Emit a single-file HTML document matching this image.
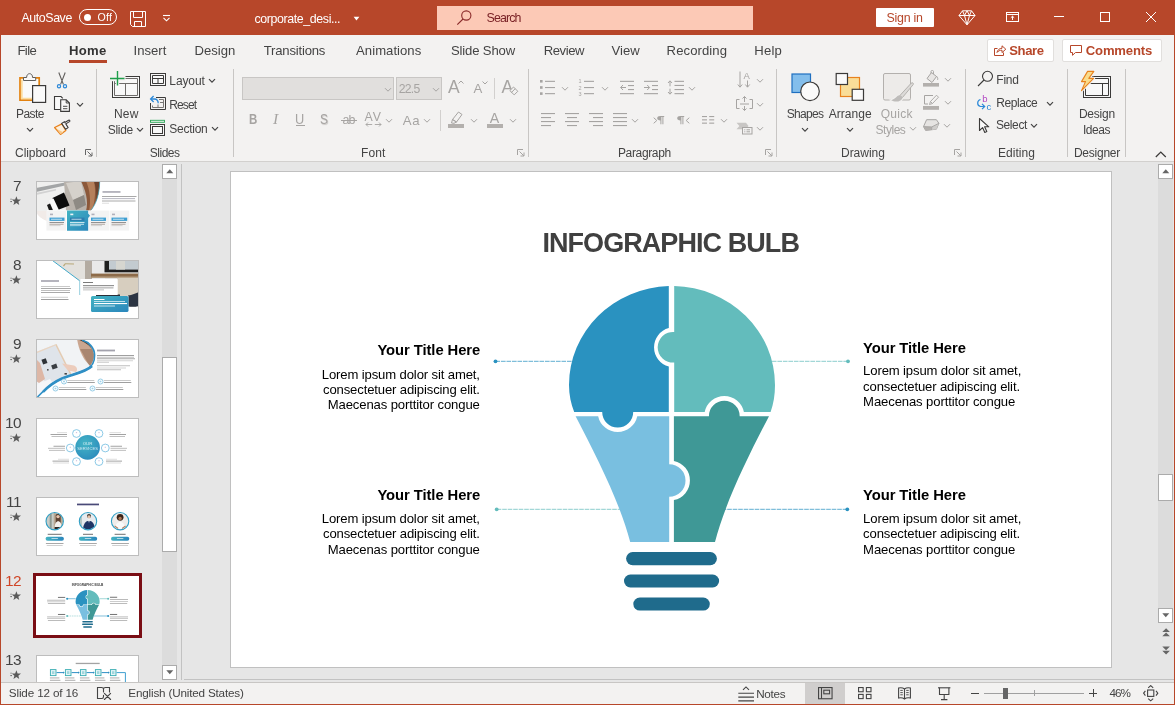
<!DOCTYPE html>
<html><head><meta charset="utf-8">
<style>
*{box-sizing:border-box;margin:0;padding:0}
html,body{width:1175px;height:705px;overflow:hidden;background:#b7472a;font-family:"Liberation Sans",sans-serif;}
.a{position:absolute}
.t{position:absolute;white-space:nowrap;line-height:1}
#win{position:absolute;left:0;top:0;width:1175px;height:705px;overflow:hidden;will-change:transform}
</style></head><body>
<div id="win">
<div class="a" style="left:0px;top:0px;width:1175px;height:705px;background:#b7472a;"></div>
<div class="a" style="left:1px;top:35px;width:1173px;height:126.5px;background:#f3f2f1;"></div>
<div class="a" style="left:1px;top:161px;width:1173px;height:1.5px;background:#d2d0ce;"></div>
<div class="a" style="left:1px;top:162px;width:1173px;height:520px;background:#e6e6e6;"></div>
<div class="a" style="left:1px;top:682px;width:1173px;height:22px;background:#f3f2f1;border-top:1px solid #c8c6c4;"></div>
<span class="t" style="left: 21.5px; top: 11px; font-size: 12.4px; line-height: 14px; color: rgb(255, 255, 255); letter-spacing: -0.42px;">AutoSave</span>
<div class="a" style="left:79px;top:9px;width:38px;height:16px;border:1px solid #fff;border-radius:8px;"></div>
<div class="a" style="left:83.8px;top:13.6px;width:7px;height:7px;background:#fff;border-radius:50%;"></div>
<span class="t" style="left: 97.5px; top: 11px; font-size: 10.6px; line-height: 12px; color: rgb(255, 255, 255); letter-spacing: 0.28px;">Off</span>
<svg class="a" style="left:130px;top:11px;" width="17" height="17" viewBox="0 0 17 17"><g fill="none" stroke="#fff" stroke-width="1"><path d="M0.5 0.5H15.5V15.5H2.5L0.5 13.5Z"></path><path d="M3.5 0.5V6.5H12.5V0.5"></path><path d="M4.5 15.5V10.5H11.5V15.5"></path></g></svg>
<svg class="a" style="left:162px;top:14px;" width="10" height="8" viewBox="0 0 10 8"><g fill="none" stroke="#fff" stroke-width="1.1"><path d="M1 1.5H8"></path><path d="M1.5 3.8L4.5 6.8L7.5 3.8"></path></g></svg>
<span class="t" style="left: 254.5px; top: 12px; font-size: 12.4px; line-height: 14px; color: rgb(255, 255, 255); letter-spacing: -0.39px;">corporate_desi...</span>
<svg class="a" style="left:353px;top:16px;" width="7" height="5" viewBox="0 0 7 5"><path d="M0.6 0.8H6.4L3.5 4.4Z" fill="#fff"></path></svg>
<div class="a" style="left:437px;top:6px;width:316px;height:24px;background:#fcc9b6;"></div>
<svg class="a" style="left:456px;top:9px;" width="17" height="17" viewBox="0 0 17 17"><g fill="none" stroke="#8a2a2a" stroke-width="1.1"><circle cx="10.3" cy="6.5" r="4.6"></circle><path d="M7 10L1.3 15.7"></path></g></svg>
<span class="t" style="left: 486.5px; top: 11px; font-size: 12.4px; line-height: 14px; color: rgb(122, 34, 38); letter-spacing: -0.87px;">Search</span>
<div class="a" style="left:876px;top:8px;width:58px;height:19px;background:#fff;border-radius:1px;"></div>
<span class="t" style="left: 886.5px; top: 11px; font-size: 12.4px; line-height: 14px; color: rgb(183, 71, 42); letter-spacing: -0.25px;">Sign in</span>
<svg class="a" style="left:958px;top:10px;" width="18" height="16" viewBox="0 0 18 16"><g fill="none" stroke="#fff" stroke-width="1" stroke-linejoin="round"><path d="M4.5 0.8H13.5L17 5.5L9 14.8L1 5.5Z"></path><path d="M1 5.5H17"></path><path d="M4.5 0.8L6.5 5.5L9 14.8L11.5 5.5L13.5 0.8"></path><path d="M6.5 5.5L9 0.8L11.5 5.5"></path></g></svg>
<svg class="a" style="left:1006px;top:12px;" width="14" height="11" viewBox="0 0 14 11"><g fill="none" stroke="#fff" stroke-width="1"><rect x="0.5" y="0.5" width="12" height="9"></rect><path d="M0.5 2.5H12.5"></path><path d="M6.5 8V4.2M4.8 5.8L6.5 4.2L8.2 5.8"></path></g></svg>
<div class="a" style="left:1054px;top:16px;width:10px;height:1px;background:#fff;"></div>
<div class="a" style="left:1100px;top:12px;width:10px;height:10px;border:1px solid #fff;"></div>
<svg class="a" style="left:1146px;top:12px;" width="10" height="10" viewBox="0 0 10 10"><path d="M0 0L10 10M10 0L0 10" stroke="#fff" stroke-width="1"></path></svg>
<span class="t" style="left: 17.4px; top: 43px; font-size: 13.1px; line-height: 15px; color: rgb(68, 68, 68); letter-spacing: -0.57px;">File</span>
<span class="t" style="left: 69px; top: 43px; font-size: 13.1px; line-height: 15px; color: rgb(51, 51, 51); font-weight: bold; letter-spacing: 0.3px;">Home</span>
<div class="a" style="left:69px;top:60px;width:38px;height:3px;background:#b7472a;"></div>
<span class="t" style="left: 133.5px; top: 43px; font-size: 13.1px; line-height: 15px; color: rgb(68, 68, 68); letter-spacing: 0.03px;">Insert</span>
<span class="t" style="left: 194.5px; top: 43px; font-size: 13.1px; line-height: 15px; color: rgb(68, 68, 68); letter-spacing: -0.01px;">Design</span>
<span class="t" style="left: 263.8px; top: 43px; font-size: 13.1px; line-height: 15px; color: rgb(68, 68, 68); letter-spacing: -0.2px;">Transitions</span>
<span class="t" style="left: 356.1px; top: 43px; font-size: 13.1px; line-height: 15px; color: rgb(68, 68, 68); letter-spacing: 0.04px;">Animations</span>
<span class="t" style="left: 450.9px; top: 43px; font-size: 13.1px; line-height: 15px; color: rgb(68, 68, 68); letter-spacing: -0.14px;">Slide Show</span>
<span class="t" style="left: 543.7px; top: 43px; font-size: 13.1px; line-height: 15px; color: rgb(68, 68, 68); letter-spacing: -0.43px;">Review</span>
<span class="t" style="left: 611.5px; top: 43px; font-size: 13.1px; line-height: 15px; color: rgb(68, 68, 68); letter-spacing: 0.05px;">View</span>
<span class="t" style="left: 666.6px; top: 43px; font-size: 13.1px; line-height: 15px; color: rgb(68, 68, 68); letter-spacing: 0.09px;">Recording</span>
<span class="t" style="left: 754.3px; top: 43px; font-size: 13.1px; line-height: 15px; color: rgb(68, 68, 68); letter-spacing: 0.22px;">Help</span>
<div class="a" style="left:987px;top:39px;width:66.5px;height:22.5px;background:#fff;border:1px solid #e1dfdd;border-radius:2px;"></div>
<svg class="a" style="left:993.5px;top:45px;" width="13" height="12" viewBox="0 0 13 12"><g fill="none" stroke="#b7472a" stroke-width="1"><path d="M3.5 3.5H0.5V10.5H9.5V7.5"></path><path d="M3 7.5C3.5 4.8 5.5 3.3 8 3.3V0.8L11.8 4.2L8 7.6V5.2C5.8 5.2 4.2 5.9 3 7.5Z"></path></g></svg>
<span class="t" style="left: 1009.2px; top: 43px; font-size: 13.1px; line-height: 15px; color: rgb(183, 71, 42); font-weight: bold; letter-spacing: -0.38px;">Share</span>
<div class="a" style="left:1062px;top:39px;width:99.5px;height:22.5px;background:#fff;border:1px solid #e1dfdd;border-radius:2px;"></div>
<svg class="a" style="left:1070px;top:45px;" width="13" height="12" viewBox="0 0 13 12"><path d="M0.5 0.5H11.5V7.5H5.5L2.5 10.3V7.5H0.5Z" fill="none" stroke="#b7472a" stroke-width="1"></path></svg>
<span class="t" style="left: 1085.8px; top: 43px; font-size: 13.1px; line-height: 15px; color: rgb(183, 71, 42); font-weight: bold; letter-spacing: -0.18px;">Comments</span>
<svg class="a" style="left:18px;top:72px;" width="30" height="32" viewBox="0 0 30 32"><path d="M2 5.8H21.2V28.2H2Z" fill="#fafafa" stroke="#e3820f" stroke-width="1.7"></path><path d="M3.8 7.4V26.5H20" fill="none" stroke="#fbdc9e" stroke-width="1.7"></path>
<path d="M5.5 8.5V5.5H8.6C8.6 0.4 14.6 0.4 14.6 5.5H17.7V8.5Z" fill="#f8f8f8" stroke="#605e5c" stroke-width="1"></path>
<rect x="14.6" y="13.6" width="13" height="16.8" fill="#fafafa" stroke="#3b3a39" stroke-width="1.2"></rect></svg>
<span class="t" style="left: 16.1px; top: 107px; font-size: 12px; line-height: 14px; color: rgb(68, 68, 68); letter-spacing: -0.62px;">Paste</span>
<svg class="a" style="left:25.8px;top:127px;" width="8" height="6" viewBox="0 0 8 6"><path d="M1 1.2L4 4.2L7 1.2" fill="none" stroke="#444" stroke-width="1.2"></path></svg>
<svg class="a" style="left:56px;top:72px;" width="12" height="17" viewBox="0 0 12 17"><g fill="none"><path d="M2.8 0.5L7.4 12.4M9.2 0.5L4.6 12.4" stroke="#605e5c" stroke-width="1.1"></path>
<circle cx="3" cy="14.2" r="1.6" stroke="#2b88d8" stroke-width="1.2"></circle><circle cx="9" cy="14.2" r="1.6" stroke="#2b88d8" stroke-width="1.2"></circle></g></svg>
<svg class="a" style="left:53px;top:95px;" width="19" height="18" viewBox="0 0 19 18"><g fill="#f8f8f8" stroke="#3b3a39" stroke-width="1.1"><path d="M7.5 14.5H1.5V1.5H8L9.8 3.4"></path><path d="M7.7 4.8H13.2L16.4 8V16.4H7.7Z"></path></g><g fill="none" stroke="#3b3a39"><path d="M13.2 4.8V8H16.4" stroke-width="0.9"></path><path d="M10 11.3H14.4M10 13.7H14.4" stroke-width="0.9"></path></g></svg>
<svg class="a" style="left:75.7px;top:102px;" width="8" height="6" viewBox="0 0 8 6"><path d="M1 1.2L4 4.2L7 1.2" fill="none" stroke="#444" stroke-width="1.2"></path></svg>
<svg class="a" style="left:54px;top:119px;" width="17" height="17" viewBox="0 0 17 17"><path d="M0.6 8.5L7.9 4.9L11.8 11.4L6.5 15.4Z" fill="#fdf0dc" stroke="#e8821e" stroke-width="1.3" stroke-linejoin="round"></path>
<path d="M2.5 9.8L9.2 13.2L6.5 15.2Z" fill="#f7c88c"></path>
<path d="M7.6 4.4L10.5 2.7L14.1 8.6L11.6 10.2Z" fill="#f8f8f8" stroke="#3b3a39" stroke-width="1.1" stroke-linejoin="round"></path><path d="M10.8 3.4L14.6 1.2C15.6 0.7 16.4 2 15.5 2.6L11.8 4.9" fill="#f8f8f8" stroke="#3b3a39" stroke-width="1.1" stroke-linejoin="round"></path></svg>
<span class="t" style="left: 15.1px; top: 146px; font-size: 12px; line-height: 14px; color: rgb(68, 68, 68); letter-spacing: -0.08px;">Clipboard</span>
<svg class="a" style="left:85px;top:149px;" width="8" height="8" viewBox="0 0 8 8"><path d="M0.5 6V0.5H6" fill="none" stroke="#666" stroke-width="1"></path><path d="M2.5 2.5L7 7M7 3.5V7H3.5" fill="none" stroke="#666" stroke-width="1"></path></svg>
<div class="a" style="left:96px;top:69px;width:1px;height:88px;background:#c8c6c4;"></div>
<svg class="a" style="left:109px;top:70px;" width="32" height="29" viewBox="0 0 32 29"><g fill="none" stroke="#3b3a39" stroke-width="1"><rect x="3.5" y="6.5" width="27" height="21" fill="#f8f8f8"></rect><path d="M5.5 8.5H28.5V25.5H5.5Z M5.5 13.5H28.5M16.5 13.5V25.5" stroke="#6e6c6a"></path></g>
<path d="M8.5 1V15.5" stroke="#f3f2f1" stroke-width="3.4"></path><path d="M1 8.5H16.5" stroke="#f3f2f1" stroke-width="5.4"></path><path d="M8.5 1V15.5M1 8.5H15.5" stroke="#1e9e4a" stroke-width="1.4"></path></svg>
<span class="t" style="left: 114px; top: 107px; font-size: 12px; line-height: 14px; color: rgb(68, 68, 68); letter-spacing: 0.19px;">New</span>
<span class="t" style="left: 107.8px; top: 123px; font-size: 12px; line-height: 14px; color: rgb(68, 68, 68); letter-spacing: -0.3px;">Slide</span>
<svg class="a" style="left:135.5px;top:127px;" width="8" height="6" viewBox="0 0 8 6"><path d="M1 1.2L4 4.2L7 1.2" fill="none" stroke="#444" stroke-width="1.2"></path></svg>
<svg class="a" style="left:150px;top:73px;" width="16" height="13" viewBox="0 0 16 13"><g fill="#f8f8f8" stroke="#3b3a39" stroke-width="1"><rect x="0.5" y="0.5" width="15" height="12"></rect><path d="M2.5 2.5H13.5V10.5H2.5ZM2.5 5.5H13.5M8 5.5V10.5"></path></g></svg>
<span class="t" style="left: 169.3px; top: 74px; font-size: 12px; line-height: 14px; color: rgb(68, 68, 68); letter-spacing: -0.09px;">Layout</span>
<svg class="a" style="left:207.9px;top:78px;" width="8" height="6" viewBox="0 0 8 6"><path d="M1 1.2L4 4.2L7 1.2" fill="none" stroke="#444" stroke-width="1.2"></path></svg>
<svg class="a" style="left:149px;top:95px;" width="18" height="15" viewBox="0 0 18 15"><g fill="none" stroke="#3b3a39" stroke-width="1"><path d="M7 2.5H16.5V14.5H1.5V8"></path><path d="M10 4.5H14.5V12.5H3.5V10.5" stroke="#797775"></path><path d="M11 7.5H14.5M9 9.5V12.5" stroke="#797775"></path></g>
<path d="M2 4H5.5C8 4 9.2 5.6 9.2 8.2" fill="none" stroke="#2b88d8" stroke-width="1.3"></path><path d="M4.6 1L1.6 4L4.6 7" fill="none" stroke="#2b88d8" stroke-width="1.3"></path></svg>
<span class="t" style="left: 169.3px; top: 98px; font-size: 12px; line-height: 14px; color: rgb(68, 68, 68); letter-spacing: -0.91px;">Reset</span>
<svg class="a" style="left:150px;top:119px;" width="16" height="17" viewBox="0 0 16 17"><rect x="0.5" y="1.3" width="14" height="2" fill="#e6f4ea" stroke="#2aa555" stroke-width="0.9"></rect>
<g fill="#f8f8f8" stroke="#3b3a39" stroke-width="1"><rect x="0.5" y="5.5" width="14" height="11"></rect><rect x="2.5" y="7.5" width="10" height="7"></rect></g></svg>
<span class="t" style="left: 169.3px; top: 122px; font-size: 12px; line-height: 14px; color: rgb(68, 68, 68); letter-spacing: -0.26px;">Section</span>
<svg class="a" style="left:210.8px;top:126px;" width="8" height="6" viewBox="0 0 8 6"><path d="M1 1.2L4 4.2L7 1.2" fill="none" stroke="#444" stroke-width="1.2"></path></svg>
<span class="t" style="left: 149.8px; top: 146px; font-size: 12px; line-height: 14px; color: rgb(68, 68, 68); letter-spacing: -0.5px;">Slides</span>
<div class="a" style="left:233px;top:69px;width:1px;height:88px;background:#c8c6c4;"></div>
<div class="a" style="left:242px;top:77px;width:152px;height:23px;background:#e1dfdd;border:1px solid #c8c6c4;"></div>
<svg class="a" style="left:384px;top:86.5px;" width="8" height="6" viewBox="0 0 8 6"><path d="M1 1.2L4 4.2L7 1.2" fill="none" stroke="#a6a4a2" stroke-width="1"></path></svg>
<div class="a" style="left:396px;top:77px;width:46px;height:23px;background:#e1dfdd;border:1px solid #c8c6c4;"></div>
<span class="t" style="left: 398.7px; top: 82px; font-size: 12.2px; line-height: 14px; color: rgb(166, 164, 162); letter-spacing: -0.71px;">22.5</span>
<svg class="a" style="left:431.6px;top:86.5px;" width="8" height="6" viewBox="0 0 8 6"><path d="M1 1.2L4 4.2L7 1.2" fill="none" stroke="#a6a4a2" stroke-width="1"></path></svg>
<span class="t" style="left:448.0px;top:77px;font-size:17.5px;line-height:20px;color:#a6a4a2;">A</span>
<svg class="a" style="left:458px;top:80px;" width="6" height="4" viewBox="0 0 6 4"><path d="M0.5 3.5L3 1L5.5 3.5" fill="none" stroke="#a6a4a2" stroke-width="1"></path></svg>
<span class="t" style="left:473.4px;top:81px;font-size:13.2px;line-height:15px;color:#a6a4a2;">A</span>
<svg class="a" style="left:482px;top:81px;" width="6" height="4" viewBox="0 0 6 4"><path d="M0.5 0.5L3 3L5.5 0.5" fill="none" stroke="#a6a4a2" stroke-width="1"></path></svg>
<div class="a" style="left:494px;top:78px;width:1px;height:21px;background:#d2d0ce;"></div>
<span class="t" style="left:501.5px;top:77px;font-size:17.5px;line-height:20px;color:#a6a4a2;">A</span>
<svg class="a" style="left:509px;top:86px;" width="10" height="10" viewBox="0 0 10 10"><path d="M4.5 1L8.8 5.3L5.2 8.9L0.9 4.6Z M2.6 6.3L6.2 2.7" fill="#f3f2f1" stroke="#a6a4a2" stroke-width="1"></path></svg>
<span class="t" style="left:248.6px;top:111px;font-size:14px;line-height:16px;color:#a6a4a2;font-weight:bold;transform:scaleX(0.82);transform-origin:0 0;">B</span>
<span class="t" style="left:273.0px;top:110px;font-size:15.6px;line-height:17px;color:#a6a4a2;font-style:italic;font-family:'Liberation Serif',serif;">I</span>
<span class="t" style="left:295.4px;top:111px;font-size:14.2px;line-height:16px;color:#a6a4a2;transform:scaleX(0.9);transform-origin:0 0;">U</span>
<div class="a" style="left:296px;top:125px;width:9px;height:1px;background:#a6a4a2;"></div>
<span class="t" style="left:320.3px;top:111px;font-size:14.2px;line-height:16px;color:#a6a4a2;text-shadow:1px 1px 1px #c8c6c4;transform:scaleX(0.84);transform-origin:0 0;">S</span>
<span class="t" style="left: 342.5px; top: 113px; font-size: 12.5px; line-height: 14px; color: rgb(166, 164, 162); letter-spacing: -1.01px;">ab</span>
<div class="a" style="left:341px;top:119.5px;width:16px;height:1px;background:#a6a4a2;"></div>
<span class="t" style="left: 364.5px; top: 110px; font-size: 12.3px; line-height: 14px; color: rgb(166, 164, 162); letter-spacing: 0.9px;">AV</span>
<svg class="a" style="left:365px;top:121.5px;" width="17" height="5" viewBox="0 0 17 5"><path d="M1 2.5H7.2M9.8 2.5H16M3 0.5L1 2.5L3 4.5M14 0.5L16 2.5L14 4.5" fill="none" stroke="#a6a4a2" stroke-width="0.9"></path></svg>
<svg class="a" style="left:385px;top:117.7px;" width="8" height="6" viewBox="0 0 8 6"><path d="M1 1.2L4 4.2L7 1.2" fill="none" stroke="#a6a4a2" stroke-width="1"></path></svg>
<span class="t" style="left: 402.8px; top: 113px; font-size: 13.2px; line-height: 15px; color: rgb(166, 164, 162); letter-spacing: 0.66px;">Aa</span>
<svg class="a" style="left:422.8px;top:117.7px;" width="8" height="6" viewBox="0 0 8 6"><path d="M1 1.2L4 4.2L7 1.2" fill="none" stroke="#a6a4a2" stroke-width="1"></path></svg>
<div class="a" style="left:440px;top:110px;width:1px;height:21px;background:#d2d0ce;"></div>
<svg class="a" style="left:448px;top:110px;" width="17" height="19" viewBox="0 0 17 19"><path d="M4.5 9.5L10.5 2L14 4.5L8.5 12Z M3.5 13L4.5 9.5L8.5 12L6 13.3Z" fill="#f3f2f1" stroke="#a6a4a2" stroke-width="1" stroke-linejoin="round"></path><rect x="0" y="14" width="16" height="4" fill="#b3b0ad"></rect></svg>
<svg class="a" style="left:469.5px;top:117.7px;" width="8" height="6" viewBox="0 0 8 6"><path d="M1 1.2L4 4.2L7 1.2" fill="none" stroke="#a6a4a2" stroke-width="1"></path></svg>
<span class="t" style="left:489.7px;top:110px;font-size:14.2px;line-height:16px;color:#a6a4a2;">A</span>
<div class="a" style="left:487px;top:124px;width:16px;height:4px;background:#b3b0ad;"></div>
<svg class="a" style="left:508.6px;top:117.7px;" width="8" height="6" viewBox="0 0 8 6"><path d="M1 1.2L4 4.2L7 1.2" fill="none" stroke="#a6a4a2" stroke-width="1"></path></svg>
<span class="t" style="left: 361px; top: 146px; font-size: 12px; line-height: 14px; color: rgb(68, 68, 68); letter-spacing: 0.13px;">Font</span>
<svg class="a" style="left:517px;top:149px;" width="8" height="8" viewBox="0 0 8 8"><path d="M0.5 6V0.5H6" fill="none" stroke="#a6a4a2" stroke-width="1"></path><path d="M2.5 2.5L7 7M7 3.5V7H3.5" fill="none" stroke="#a6a4a2" stroke-width="1"></path></svg>
<div class="a" style="left:528px;top:69px;width:1px;height:88px;background:#c8c6c4;"></div>
<svg class="a" style="left:540px;top:80px;" width="16" height="15" viewBox="0 0 16 15"><g fill="#a6a4a2"><rect x="0" y="0" width="2.6" height="2.6"></rect><rect x="0" y="6.2" width="2.6" height="2.6"></rect><rect x="0" y="12.3" width="2.6" height="2.6"></rect>
<rect x="5" y="0.8" width="10" height="1.1"></rect><rect x="5" y="7" width="10" height="1.1"></rect><rect x="5" y="13.1" width="10" height="1.1"></rect></g></svg>
<svg class="a" style="left:561.4px;top:85.9px;" width="8" height="6" viewBox="0 0 8 6"><path d="M1 1.2L4 4.2L7 1.2" fill="none" stroke="#a6a4a2" stroke-width="1"></path></svg>
<svg class="a" style="left:578px;top:79px;" width="17" height="17" viewBox="0 0 17 17"><g fill="#a6a4a2"><rect x="6" y="1.8" width="10" height="1.1"></rect><rect x="6" y="8" width="10" height="1.1"></rect><rect x="6" y="14.1" width="10" height="1.1"></rect></g>
<g font-family="Liberation Sans" font-size="5.5" fill="#a6a4a2"><text x="0.6" y="4.4">1</text><text x="0.6" y="10.5">2</text><text x="0.6" y="16.6">3</text></g></svg>
<svg class="a" style="left:600.8px;top:85.9px;" width="8" height="6" viewBox="0 0 8 6"><path d="M1 1.2L4 4.2L7 1.2" fill="none" stroke="#a6a4a2" stroke-width="1"></path></svg>
<svg class="a" style="left:620px;top:80px;" width="15" height="15" viewBox="0 0 15 15"><g fill="#a6a4a2"><rect x="0" y="0.8" width="14" height="1.1"></rect><rect x="0" y="13.1" width="14" height="1.1"></rect><rect x="8" y="5" width="6" height="1.1"></rect><rect x="8" y="9" width="6" height="1.1"></rect></g>
<path d="M6 7.5H0.8M3 5L0.6 7.5L3 10" fill="none" stroke="#a6a4a2" stroke-width="1"></path></svg>
<svg class="a" style="left:644px;top:80px;" width="15" height="15" viewBox="0 0 15 15"><g fill="#a6a4a2"><rect x="0" y="0.8" width="14" height="1.1"></rect><rect x="0" y="13.1" width="14" height="1.1"></rect><rect x="8" y="5" width="6" height="1.1"></rect><rect x="8" y="9" width="6" height="1.1"></rect></g>
<path d="M0 7.5H5.4M3.2 5L5.6 7.5L3.2 10" fill="none" stroke="#a6a4a2" stroke-width="1"></path></svg>
<svg class="a" style="left:667px;top:80px;" width="18" height="15" viewBox="0 0 18 15"><g fill="#a6a4a2"><rect x="7.5" y="0.8" width="9.5" height="1.1"></rect><rect x="7.5" y="4.9" width="9.5" height="1.1"></rect><rect x="7.5" y="9" width="9.5" height="1.1"></rect><rect x="7.5" y="13.1" width="9.5" height="1.1"></rect></g>
<path d="M3 1V6.3M1 3L3 0.8L5 3M3 8.7V14M1 12L3 14.2L5 12" fill="none" stroke="#a6a4a2" stroke-width="1"></path></svg>
<svg class="a" style="left:687.6px;top:85.9px;" width="8" height="6" viewBox="0 0 8 6"><path d="M1 1.2L4 4.2L7 1.2" fill="none" stroke="#a6a4a2" stroke-width="1"></path></svg>
<svg class="a" style="left:541px;top:113px;" width="14" height="14" viewBox="0 0 14 14"><rect x="0" y="0.0" width="14" height="1.1" fill="#a6a4a2"></rect><rect x="0" y="4.0" width="10" height="1.1" fill="#a6a4a2"></rect><rect x="0" y="8.0" width="14" height="1.1" fill="#a6a4a2"></rect><rect x="0" y="12.0" width="10" height="1.1" fill="#a6a4a2"></rect></svg>
<svg class="a" style="left:565px;top:113px;" width="14" height="14" viewBox="0 0 14 14"><rect x="0.0" y="0.0" width="14" height="1.1" fill="#a6a4a2"></rect><rect x="2.0" y="4.0" width="10" height="1.1" fill="#a6a4a2"></rect><rect x="0.0" y="8.0" width="14" height="1.1" fill="#a6a4a2"></rect><rect x="2.0" y="12.0" width="10" height="1.1" fill="#a6a4a2"></rect></svg>
<svg class="a" style="left:589px;top:113px;" width="14" height="14" viewBox="0 0 14 14"><rect x="0" y="0.0" width="14" height="1.1" fill="#a6a4a2"></rect><rect x="4" y="4.0" width="10" height="1.1" fill="#a6a4a2"></rect><rect x="0" y="8.0" width="14" height="1.1" fill="#a6a4a2"></rect><rect x="4" y="12.0" width="10" height="1.1" fill="#a6a4a2"></rect></svg>
<svg class="a" style="left:613px;top:113px;" width="14" height="14" viewBox="0 0 14 14"><rect x="0" y="0.0" width="14" height="1.1" fill="#a6a4a2"></rect><rect x="0" y="4.0" width="14" height="1.1" fill="#a6a4a2"></rect><rect x="0" y="8.0" width="14" height="1.1" fill="#a6a4a2"></rect><rect x="0" y="12.0" width="14" height="1.1" fill="#a6a4a2"></rect></svg>
<svg class="a" style="left:631.2px;top:117.7px;" width="8" height="6" viewBox="0 0 8 6"><path d="M1 1.2L4 4.2L7 1.2" fill="none" stroke="#a6a4a2" stroke-width="1"></path></svg>
<svg class="a" style="left:657.3px;top:115.8px;" width="8" height="9" viewBox="0 0 8 9"><path d="M3.2 0H7.2V1H6.4V8.2H5.4V1H4.4V8.2H3.4V4.4C1.4 4.4 0.2 3.5 0.2 2.2C0.2 0.9 1.4 0 3.2 0Z" fill="#a6a4a2"></path></svg>
<svg class="a" style="left:652.5px;top:116.5px;" width="5" height="7" viewBox="0 0 5 7"><path d="M0.7 0.7L3.8 3.5L0.7 6.3" fill="none" stroke="#a6a4a2" stroke-width="1"></path></svg>
<svg class="a" style="left:676.8px;top:115.8px;" width="8" height="9" viewBox="0 0 8 9"><path d="M3.2 0H7.2V1H6.4V8.2H5.4V1H4.4V8.2H3.4V4.4C1.4 4.4 0.2 3.5 0.2 2.2C0.2 0.9 1.4 0 3.2 0Z" fill="#a6a4a2"></path></svg>
<svg class="a" style="left:685px;top:116.5px;" width="5" height="7" viewBox="0 0 5 7"><path d="M4.3 0.7L1.2 3.5L4.3 6.3" fill="none" stroke="#a6a4a2" stroke-width="1"></path></svg>
<svg class="a" style="left:702px;top:116px;" width="13" height="8" viewBox="0 0 13 8"><g fill="#a6a4a2"><rect x="0" y="0" width="5" height="1.1"></rect><rect x="7.2" y="0" width="5" height="1.1"></rect><rect x="0" y="3.3" width="5" height="1.1"></rect><rect x="7.2" y="3.3" width="5" height="1.1"></rect><rect x="0" y="6.6" width="5" height="1.1"></rect><rect x="7.2" y="6.6" width="5" height="1.1"></rect></g></svg>
<svg class="a" style="left:719.5px;top:117.7px;" width="8" height="6" viewBox="0 0 8 6"><path d="M1 1.2L4 4.2L7 1.2" fill="none" stroke="#a6a4a2" stroke-width="1"></path></svg>
<svg class="a" style="left:737px;top:71px;" width="15" height="18" viewBox="0 0 15 18"><path d="M3 0.5V16M0.8 13.5L3 16.2L5.2 13.5M10.5 9.5V16M8.3 13.5L10.5 16.2L12.7 13.5" fill="none" stroke="#a6a4a2" stroke-width="1"></path>
<text x="6.6" y="7.6" font-family="Liberation Sans" font-size="9.5" fill="#a6a4a2">A</text></svg>
<svg class="a" style="left:755.6px;top:77.8px;" width="8" height="6" viewBox="0 0 8 6"><path d="M1 1.2L4 4.2L7 1.2" fill="none" stroke="#a6a4a2" stroke-width="1"></path></svg>
<svg class="a" style="left:735.5px;top:96px;" width="17" height="15" viewBox="0 0 17 15"><path d="M3.5 3.5H0.5V12.5H3.5M13.5 3.5H16.5V12.5H13.5M4 8H13" fill="none" stroke="#a6a4a2" stroke-width="1"></path>
<path d="M8.5 0.6V6M6.5 2.5L8.5 0.5L10.5 2.5M8.5 10V14.4M6.5 12.5L8.5 14.5L10.5 12.5" fill="none" stroke="#a6a4a2" stroke-width="1"></path></svg>
<svg class="a" style="left:755.6px;top:102.2px;" width="8" height="6" viewBox="0 0 8 6"><path d="M1 1.2L4 4.2L7 1.2" fill="none" stroke="#a6a4a2" stroke-width="1"></path></svg>
<svg class="a" style="left:736px;top:122px;" width="17" height="13" viewBox="0 0 17 13"><path d="M0.5 0.8H10L12.5 4L10 7.2H0.5L3.4 4Z" fill="#c8c6c4"></path>
<rect x="6.5" y="5.5" width="9.5" height="6.5" fill="#f3f2f1" stroke="#a6a4a2" stroke-width="1"></rect><path d="M8.3 7.8H9.3M10.5 7.8H14M8.3 9.8H9.3M10.5 9.8H14" stroke="#a6a4a2" stroke-width="1"></path></svg>
<svg class="a" style="left:755.6px;top:126.3px;" width="8" height="6" viewBox="0 0 8 6"><path d="M1 1.2L4 4.2L7 1.2" fill="none" stroke="#a6a4a2" stroke-width="1"></path></svg>
<span class="t" style="left: 617.9px; top: 146px; font-size: 12px; line-height: 14px; color: rgb(68, 68, 68); letter-spacing: -0.34px;">Paragraph</span>
<svg class="a" style="left:765px;top:149px;" width="8" height="8" viewBox="0 0 8 8"><path d="M0.5 6V0.5H6" fill="none" stroke="#a6a4a2" stroke-width="1"></path><path d="M2.5 2.5L7 7M7 3.5V7H3.5" fill="none" stroke="#a6a4a2" stroke-width="1"></path></svg>
<div class="a" style="left:776px;top:69px;width:1px;height:88px;background:#c8c6c4;"></div>
<svg class="a" style="left:791.2px;top:72.6px;" width="31" height="30" viewBox="0 0 31 30"><rect x="1" y="1" width="18.5" height="18.5" fill="#83beec" stroke="#1e6fc0" stroke-width="1.2"></rect>
<circle cx="19" cy="18.3" r="9.3" fill="#fafafa" stroke="#3b3a39" stroke-width="1.2"></circle></svg>
<span class="t" style="left: 786.8px; top: 107px; font-size: 12px; line-height: 14px; color: rgb(68, 68, 68); letter-spacing: -0.68px;">Shapes</span>
<svg class="a" style="left:801.4px;top:127px;" width="8" height="6" viewBox="0 0 8 6"><path d="M1 1.2L4 4.2L7 1.2" fill="none" stroke="#444" stroke-width="1.2"></path></svg>
<svg class="a" style="left:835px;top:72px;" width="30" height="30" viewBox="0 0 30 30"><rect x="5.5" y="5.5" width="19" height="19" fill="#f9dd98" stroke="#e8821e" stroke-width="1.2"></rect>
<rect x="1.2" y="1.5" width="11.3" height="11" fill="#fafafa" stroke="#3b3a39" stroke-width="1.2"></rect><rect x="17.2" y="17.3" width="11.3" height="11" fill="#fafafa" stroke="#3b3a39" stroke-width="1.2"></rect></svg>
<span class="t" style="left: 828.7px; top: 107px; font-size: 12px; line-height: 14px; color: rgb(68, 68, 68); letter-spacing: 0.03px;">Arrange</span>
<svg class="a" style="left:845.5px;top:127px;" width="8" height="6" viewBox="0 0 8 6"><path d="M1 1.2L4 4.2L7 1.2" fill="none" stroke="#444" stroke-width="1.2"></path></svg>
<svg class="a" style="left:882px;top:72px;" width="33" height="32" viewBox="0 0 33 32"><rect x="1.5" y="1.5" width="27" height="26.5" rx="1.5" fill="#edebe9" stroke="#b3b0ad" stroke-width="1"></rect>
<path d="M18 23.4C14.5 23 14.5 27 9.2 28.2C13 30.6 20 29.8 20.4 25.4Z" fill="#f3f2f1" stroke="#f3f2f1" stroke-width="2"></path>
<path d="M29.2 11.2C30.2 10 32 11.2 31.2 12.6L20.4 25.6L17.8 23.6Z" fill="#dcdad8" stroke="#aeaba8" stroke-width="0.9" stroke-linejoin="round"></path>
<path d="M18 23.4C14.5 23 14.5 27 9.2 28.2C13 30.6 20 29.8 20.4 25.4Z" fill="#bebcba"></path></svg>
<span class="t" style="left: 880.8px; top: 107px; font-size: 12px; line-height: 14px; color: rgb(166, 164, 162); letter-spacing: 0.23px;">Quick</span>
<span class="t" style="left: 875.6px; top: 123px; font-size: 12px; line-height: 14px; color: rgb(166, 164, 162); letter-spacing: -0.48px;">Styles</span>
<svg class="a" style="left:908.8px;top:126.2px;" width="8" height="6" viewBox="0 0 8 6"><path d="M1 1.2L4 4.2L7 1.2" fill="none" stroke="#a6a4a2" stroke-width="1"></path></svg>
<svg class="a" style="left:923px;top:70px;" width="17" height="17" viewBox="0 0 17 17"><path d="M4 8.5L8.5 2.5L13.5 6.5L9 12.5Z" fill="#e8e6e4" stroke="#a6a4a2" stroke-width="1" stroke-linejoin="round"></path><path d="M8 3.5V1.5C8 0 10.5 0 10.5 1.5V4" fill="none" stroke="#a6a4a2" stroke-width="0.9"></path><path d="M13.3 6C15 7.5 15 9 14.5 10" fill="none" stroke="#a6a4a2" stroke-width="0.9"></path>
<rect x="0" y="13" width="16" height="3.6" fill="#b3b0ad"></rect></svg>
<svg class="a" style="left:944.4px;top:77.0px;" width="8" height="6" viewBox="0 0 8 6"><path d="M1 1.2L4 4.2L7 1.2" fill="none" stroke="#a6a4a2" stroke-width="1"></path></svg>
<svg class="a" style="left:923px;top:94px;" width="17" height="17" viewBox="0 0 17 17"><path d="M10 1.5H1.5V10H5" fill="none" stroke="#a6a4a2" stroke-width="1"></path><path d="M6.5 10.5L7.5 7.5L13.5 1.2L15.5 3.2L9.5 9.5Z M7.5 7.5L9.5 9.5" fill="#f3f2f1" stroke="#a6a4a2" stroke-width="0.9" stroke-linejoin="round"></path>
<rect x="0" y="12" width="16" height="3.8" fill="#b3b0ad"></rect></svg>
<svg class="a" style="left:944.4px;top:99.7px;" width="8" height="6" viewBox="0 0 8 6"><path d="M1 1.2L4 4.2L7 1.2" fill="none" stroke="#a6a4a2" stroke-width="1"></path></svg>
<svg class="a" style="left:923px;top:119px;" width="17" height="13" viewBox="0 0 17 13"><path d="M3.6 0.7H13.4L15.9 4.3L13.4 10.2L2.6 11.4L0.5 7.6Z" fill="#e6e4e2" stroke="#a6a4a2" stroke-width="1" stroke-linejoin="round"></path>
<path d="M0.5 7.6L8.8 7.9L8.6 11L2.6 11.4Z" fill="#b3b0ad"></path><path d="M8.8 7.9L15.9 4.3L13.4 10.2L8.6 11Z" fill="#cfcdcb"></path>
<path d="M0.5 7.6L8.8 7.9L15.9 4.3M8.8 7.9L8.6 11" fill="none" stroke="#a6a4a2" stroke-width="0.9"></path></svg>
<svg class="a" style="left:942.6px;top:123.0px;" width="8" height="6" viewBox="0 0 8 6"><path d="M1 1.2L4 4.2L7 1.2" fill="none" stroke="#a6a4a2" stroke-width="1"></path></svg>
<span class="t" style="left: 841px; top: 146px; font-size: 12px; line-height: 14px; color: rgb(68, 68, 68); letter-spacing: -0.02px;">Drawing</span>
<svg class="a" style="left:954px;top:149px;" width="8" height="8" viewBox="0 0 8 8"><path d="M0.5 6V0.5H6" fill="none" stroke="#a6a4a2" stroke-width="1"></path><path d="M2.5 2.5L7 7M7 3.5V7H3.5" fill="none" stroke="#a6a4a2" stroke-width="1"></path></svg>
<div class="a" style="left:965px;top:69px;width:1px;height:88px;background:#c8c6c4;"></div>
<svg class="a" style="left:977px;top:70px;" width="17" height="17" viewBox="0 0 17 17"><g fill="none" stroke="#3b3a39" stroke-width="1.1"><circle cx="10.5" cy="6.3" r="5"></circle><path d="M7 10L1 16"></path></g></svg>
<span class="t" style="left: 996.3px; top: 73px; font-size: 12px; line-height: 14px; color: rgb(68, 68, 68); letter-spacing: -0.25px;">Find</span>
<svg class="a" style="left:976px;top:93px;" width="17" height="18" viewBox="0 0 17 18"><text x="6.2" y="8.5" font-family="Liberation Sans" font-size="9.5" fill="#b146c2">b</text><text x="10.5" y="17" font-family="Liberation Sans" font-size="9.5" fill="#2b88d8">c</text>
<path d="M4.5 6.5C1 7.5 0.5 12.5 4.5 13.5H8.5M6 10.8L8.7 13.5L6 16.2" fill="none" stroke="#2b88d8" stroke-width="1.2"></path></svg>
<span class="t" style="left: 996.3px; top: 96px; font-size: 12px; line-height: 14px; color: rgb(68, 68, 68); letter-spacing: -0.44px;">Replace</span>
<svg class="a" style="left:1046.4px;top:101px;" width="8" height="6" viewBox="0 0 8 6"><path d="M1 1.2L4 4.2L7 1.2" fill="none" stroke="#444" stroke-width="1.2"></path></svg>
<svg class="a" style="left:978px;top:117px;" width="13" height="17" viewBox="0 0 13 17"><path d="M1.5 1.5V13.5L4.6 10.6L6.8 15.4L8.8 14.5L6.6 9.8H10.8Z" fill="#fafafa" stroke="#3b3a39" stroke-width="1.1" stroke-linejoin="round"></path></svg>
<span class="t" style="left: 996px; top: 118px; font-size: 12px; line-height: 14px; color: rgb(68, 68, 68); letter-spacing: -0.41px;">Select</span>
<svg class="a" style="left:1029.8px;top:122.6px;" width="8" height="6" viewBox="0 0 8 6"><path d="M1 1.2L4 4.2L7 1.2" fill="none" stroke="#444" stroke-width="1.2"></path></svg>
<span class="t" style="left: 998px; top: 146px; font-size: 12px; line-height: 14px; color: rgb(68, 68, 68); letter-spacing: 0.02px;">Editing</span>
<div class="a" style="left:1067px;top:69px;width:1px;height:88px;background:#c8c6c4;"></div>
<svg class="a" style="left:1080px;top:70px;" width="32" height="29" viewBox="0 0 32 29"><g fill="#f8f8f8" stroke="#3b3a39" stroke-width="1"><rect x="3.5" y="6.5" width="27" height="21"></rect><path d="M5.5 8.5H28.5V25.5H5.5Z M5.5 13.5H28.5M22.5 13.5V25.5"></path></g>
<path d="M7.6 1.4H13.8L8.8 8.4H13.6L1.5 20.6L5.5 11.6H1.5Z" fill="#f3f2f1" stroke="#f3f2f1" stroke-width="3.2" stroke-linejoin="round"></path>
<path d="M7.6 1.4H13.8L8.8 8.4H13.6L1.5 20.6L5.5 11.6H1.5Z" fill="#f9dc8c" stroke="#e8821e" stroke-width="1.1" stroke-linejoin="round"></path></svg>
<span class="t" style="left: 1078.9px; top: 107px; font-size: 12px; line-height: 14px; color: rgb(68, 68, 68); letter-spacing: -0.21px;">Design</span>
<span class="t" style="left: 1082.9px; top: 123px; font-size: 12px; line-height: 14px; color: rgb(68, 68, 68); letter-spacing: -0.41px;">Ideas</span>
<span class="t" style="left: 1073.9px; top: 146px; font-size: 12px; line-height: 14px; color: rgb(68, 68, 68); letter-spacing: -0.23px;">Designer</span>
<div class="a" style="left:1125px;top:69px;width:1px;height:88px;background:#c8c6c4;"></div>
<svg class="a" style="left:1155px;top:151px;" width="12" height="7" viewBox="0 0 12 7"><path d="M0.8 6L5.8 1L10.8 6" fill="none" stroke="#3b3a39" stroke-width="1.2"></path></svg>
<div class="a" style="left:162px;top:164px;width:15px;height:516px;background:#dcdcdc;"></div>
<div class="a" style="left:162px;top:164px;width:15px;height:15px;background:#fff;border:1px solid #ababab;"></div>
<svg class="a" style="left:165.7px;top:169.2px;" width="8" height="5" viewBox="0 0 8 5"><path d="M0.3 4.3L3.8 0.3L7.3 4.3Z" fill="#666"></path></svg>
<div class="a" style="left:162px;top:665px;width:15px;height:15px;background:#fff;border:1px solid #ababab;"></div>
<svg class="a" style="left:165.7px;top:670.2px;" width="8" height="5" viewBox="0 0 8 5"><path d="M0.3 0.3L3.8 4.3L7.3 0.3Z" fill="#666"></path></svg>
<div class="a" style="left:162px;top:357px;width:15px;height:195px;background:#fff;border:1px solid #ababab;"></div>
<div class="a" style="left:181px;top:164px;width:1px;height:516px;background:#c2c2c2;"></div>
<div class="a" style="left:184px;top:679px;width:990px;height:1px;background:#c2c2c2;"></div>
<div class="a" style="left:1158px;top:164px;width:15px;height:459px;background:#dcdcdc;"></div>
<div class="a" style="left:1158px;top:164px;width:15px;height:15px;background:#fff;border:1px solid #ababab;"></div>
<svg class="a" style="left:1161.7px;top:169.2px;" width="8" height="5" viewBox="0 0 8 5"><path d="M0.3 4.3L3.8 0.3L7.3 4.3Z" fill="#666"></path></svg>
<div class="a" style="left:1158px;top:608px;width:15px;height:15px;background:#fff;border:1px solid #ababab;"></div>
<svg class="a" style="left:1161.7px;top:613.2px;" width="8" height="5" viewBox="0 0 8 5"><path d="M0.3 0.3L3.8 4.3L7.3 0.3Z" fill="#666"></path></svg>
<div class="a" style="left:1158px;top:474px;width:15px;height:27px;background:#fff;border:1px solid #ababab;"></div>
<svg class="a" style="left:1161.5px;top:628px;" width="9" height="9" viewBox="0 0 9 9"><path d="M0.3 4L4.1 0.2L7.9 4ZM0.3 8.2L4.1 4.4L7.9 8.2Z" fill="#666"></path></svg>
<svg class="a" style="left:1161.5px;top:645.5px;" width="9" height="9" viewBox="0 0 9 9"><path d="M0.3 0.5L4.1 4.3L7.9 0.5ZM0.3 4.7L4.1 8.5L7.9 4.7Z" fill="#666"></path></svg>
<div class="a" style="left:230px;top:171px;width:882px;height:497px;background:#fff;border:1px solid #c0c0c0;"></div>
<svg class="a" style="left:230px;top:171px" width="882" height="497" viewBox="230 171 882 497"><g fill="none" stroke-width="0.75" stroke-dasharray="4.6 0.9">
<path d="M495.5 361.3H575" stroke="#2a92c0"></path><path d="M848 361.3H768" stroke="#63bcbc"></path>
<path d="M496.7 509.3H625" stroke="#63bcbc"></path><path d="M847.3 509.3H718" stroke="#2a92c0"></path></g>
<circle cx="495.5" cy="361.3" r="1.9" fill="#2a92c0"></circle><circle cx="848" cy="361.3" r="1.9" fill="#63bcbc"></circle>
<circle cx="496.7" cy="509.3" r="1.9" fill="#63bcbc"></circle><circle cx="847.3" cy="509.3" r="1.9" fill="#2a92c0"></circle><path d="M668.8 286.05A103 99 0 0 0 569 385C569 395 571 404 574.2 412L602.2 412A15.5 15.5 0 0 0 633.2 412L668.8 412L668.8 366.6A20 20 0 0 1 668.8 328Z" fill="#2a92c0"></path>
<path d="M674.2 286.02A103 99 0 0 1 775 385C775 395 773.5 404 770.6 412L743.9 412A20 20 0 0 0 704.7 412L674.2 412L674.2 362.55A15.3 15.3 0 1 1 674.2 332.05Z" fill="#63bcbc"></path>
<path d="M575.6 416.2L598.15 416.2A20 20 0 0 0 637.25 416.2L669.2 416.2L669.2 464.2A16.3 16.3 0 1 1 669.2 496.8L669.2 542L630.2 542C619.8 502 596.4 456.2 575.6 416.2Z" fill="#79bfe0"></path>
<path d="M673.9 416.2L708.9 416.2A15.4 15.4 0 0 1 739.7 416.2L769 416.2C748.2 456.2 725.4 502 715 542L673.9 542L673.9 500.1A20 20 0 0 0 673.9 460.9Z" fill="#3f9896"></path>
<rect x="626.1" y="552" width="90.8" height="13.2" rx="6.6" fill="#1f6b8c"></rect>
<rect x="624" y="574.6" width="95.1" height="12.8" rx="6.4" fill="#1f6b8c"></rect>
<rect x="633.3" y="597.5" width="76.5" height="13.1" rx="6.55" fill="#1f6b8c"></rect></svg>
<span class="t" style="left: 542.4px; top: 228px; font-size: 27px; line-height: 30px; color: rgb(64, 64, 64); font-weight: bold; letter-spacing: -0.93px;">INFOGRAPHIC BULB</span>
<span class="t" style="left: 377.4px; top: 342px; font-size: 14.8px; line-height: 16px; color: rgb(0, 0, 0); font-weight: bold; letter-spacing: -0.07px;">Your Title Here</span>
<span class="t" style="left: 321.8px; top: 367px; font-size: 13.1px; line-height: 15px; color: rgb(0, 0, 0); letter-spacing: -0.13px;">Lorem ipsum dolor sit amet,</span>
<span class="t" style="left: 323px; top: 382px; font-size: 13.1px; line-height: 15px; color: rgb(0, 0, 0); letter-spacing: -0.14px;">consectetuer adipiscing elit.</span>
<span class="t" style="left: 327.7px; top: 397px; font-size: 13.1px; line-height: 15px; color: rgb(0, 0, 0); letter-spacing: -0.12px;">Maecenas porttitor congue</span>
<span class="t" style="left: 377.4px; top: 487px; font-size: 14.8px; line-height: 16px; color: rgb(0, 0, 0); font-weight: bold; letter-spacing: -0.07px;">Your Title Here</span>
<span class="t" style="left: 321.8px; top: 511px; font-size: 13.1px; line-height: 15px; color: rgb(0, 0, 0); letter-spacing: -0.13px;">Lorem ipsum dolor sit amet,</span>
<span class="t" style="left: 323px; top: 526px; font-size: 13.1px; line-height: 15px; color: rgb(0, 0, 0); letter-spacing: -0.14px;">consectetuer adipiscing elit.</span>
<span class="t" style="left: 327.7px; top: 542px; font-size: 13.1px; line-height: 15px; color: rgb(0, 0, 0); letter-spacing: -0.12px;">Maecenas porttitor congue</span>
<span class="t" style="left: 863px; top: 340px; font-size: 14.8px; line-height: 16px; color: rgb(0, 0, 0); font-weight: bold; letter-spacing: -0.07px;">Your Title Here</span>
<span class="t" style="left: 863.1px; top: 363px; font-size: 13.1px; line-height: 15px; color: rgb(0, 0, 0); letter-spacing: -0.13px;">Lorem ipsum dolor sit amet,</span>
<span class="t" style="left: 863.1px; top: 379px; font-size: 13.1px; line-height: 15px; color: rgb(0, 0, 0); letter-spacing: -0.14px;">consectetuer adipiscing elit.</span>
<span class="t" style="left: 863.1px; top: 394px; font-size: 13.1px; line-height: 15px; color: rgb(0, 0, 0); letter-spacing: -0.12px;">Maecenas porttitor congue</span>
<span class="t" style="left: 863px; top: 487px; font-size: 14.8px; line-height: 16px; color: rgb(0, 0, 0); font-weight: bold; letter-spacing: -0.07px;">Your Title Here</span>
<span class="t" style="left: 863.1px; top: 511px; font-size: 13.1px; line-height: 15px; color: rgb(0, 0, 0); letter-spacing: -0.13px;">Lorem ipsum dolor sit amet,</span>
<span class="t" style="left: 863.1px; top: 526px; font-size: 13.1px; line-height: 15px; color: rgb(0, 0, 0); letter-spacing: -0.14px;">consectetuer adipiscing elit.</span>
<span class="t" style="left: 863.1px; top: 542px; font-size: 13.1px; line-height: 15px; color: rgb(0, 0, 0); letter-spacing: -0.12px;">Maecenas porttitor congue</span>
<div class="a" style="left:0;top:177.80px;width:20.9px;text-align:right;font-size:15.4px;line-height:1;color:#444;white-space:nowrap;letter-spacing:-0.6px">7</div>
<svg class="a" style="left:10.4px;top:196.1px;" width="12" height="10" viewBox="0 0 12 10"><g transform="translate(1.2,0) scale(0.94)"><path d="M5.5 0.3L6.8 3.6L10.4 3.8L7.6 6L8.6 9.5L5.5 7.5L2.4 9.5L3.4 6L0.6 3.8L4.2 3.6Z" fill="#5a5a5a"></path></g><path d="M0.5 3.2H1.6M0.3 5.6H2" stroke="#5a5a5a" stroke-width="0.9"></path></svg>
<div class="a" style="left:0;top:256.80px;width:20.9px;text-align:right;font-size:15.4px;line-height:1;color:#444;white-space:nowrap;letter-spacing:-0.6px">8</div>
<svg class="a" style="left:10.4px;top:275.1px;" width="12" height="10" viewBox="0 0 12 10"><g transform="translate(1.2,0) scale(0.94)"><path d="M5.5 0.3L6.8 3.6L10.4 3.8L7.6 6L8.6 9.5L5.5 7.5L2.4 9.5L3.4 6L0.6 3.8L4.2 3.6Z" fill="#5a5a5a"></path></g><path d="M0.5 3.2H1.6M0.3 5.6H2" stroke="#5a5a5a" stroke-width="0.9"></path></svg>
<div class="a" style="left:0;top:335.80px;width:20.9px;text-align:right;font-size:15.4px;line-height:1;color:#444;white-space:nowrap;letter-spacing:-0.6px">9</div>
<svg class="a" style="left:10.4px;top:354.1px;" width="12" height="10" viewBox="0 0 12 10"><g transform="translate(1.2,0) scale(0.94)"><path d="M5.5 0.3L6.8 3.6L10.4 3.8L7.6 6L8.6 9.5L5.5 7.5L2.4 9.5L3.4 6L0.6 3.8L4.2 3.6Z" fill="#5a5a5a"></path></g><path d="M0.5 3.2H1.6M0.3 5.6H2" stroke="#5a5a5a" stroke-width="0.9"></path></svg>
<div class="a" style="left:0;top:414.80px;width:20.9px;text-align:right;font-size:15.4px;line-height:1;color:#444;white-space:nowrap;letter-spacing:-0.6px">10</div>
<svg class="a" style="left:10.4px;top:433.1px;" width="12" height="10" viewBox="0 0 12 10"><g transform="translate(1.2,0) scale(0.94)"><path d="M5.5 0.3L6.8 3.6L10.4 3.8L7.6 6L8.6 9.5L5.5 7.5L2.4 9.5L3.4 6L0.6 3.8L4.2 3.6Z" fill="#5a5a5a"></path></g><path d="M0.5 3.2H1.6M0.3 5.6H2" stroke="#5a5a5a" stroke-width="0.9"></path></svg>
<div class="a" style="left:0;top:493.80px;width:20.9px;text-align:right;font-size:15.4px;line-height:1;color:#444;white-space:nowrap;letter-spacing:-0.6px">11</div>
<svg class="a" style="left:10.4px;top:512.1px;" width="12" height="10" viewBox="0 0 12 10"><g transform="translate(1.2,0) scale(0.94)"><path d="M5.5 0.3L6.8 3.6L10.4 3.8L7.6 6L8.6 9.5L5.5 7.5L2.4 9.5L3.4 6L0.6 3.8L4.2 3.6Z" fill="#5a5a5a"></path></g><path d="M0.5 3.2H1.6M0.3 5.6H2" stroke="#5a5a5a" stroke-width="0.9"></path></svg>
<div class="a" style="left:0;top:572.80px;width:20.9px;text-align:right;font-size:15.4px;line-height:1;color:#d04526;white-space:nowrap;letter-spacing:-0.6px">12</div>
<svg class="a" style="left:10.4px;top:591.1px;" width="12" height="10" viewBox="0 0 12 10"><g transform="translate(1.2,0) scale(0.94)"><path d="M5.5 0.3L6.8 3.6L10.4 3.8L7.6 6L8.6 9.5L5.5 7.5L2.4 9.5L3.4 6L0.6 3.8L4.2 3.6Z" fill="#5a5a5a"></path></g><path d="M0.5 3.2H1.6M0.3 5.6H2" stroke="#5a5a5a" stroke-width="0.9"></path></svg>
<div class="a" style="left:0;top:651.80px;width:20.9px;text-align:right;font-size:15.4px;line-height:1;color:#444;white-space:nowrap;letter-spacing:-0.6px">13</div>
<svg class="a" style="left:10.4px;top:670.1px;" width="12" height="10" viewBox="0 0 12 10"><g transform="translate(1.2,0) scale(0.94)"><path d="M5.5 0.3L6.8 3.6L10.4 3.8L7.6 6L8.6 9.5L5.5 7.5L2.4 9.5L3.4 6L0.6 3.8L4.2 3.6Z" fill="#5a5a5a"></path></g><path d="M0.5 3.2H1.6M0.3 5.6H2" stroke="#5a5a5a" stroke-width="0.9"></path></svg>
<svg class="a" style="left:36px;top:181px" width="103" height="59" viewBox="0 0 103 59"><rect x="0" y="0" width="103" height="59" fill="#fff"></rect><g style="filter:blur(0.35px)"><defs><clipPath id="c7"><path d="M0 0H63.7C63.5 14 60 23 55 29.3H11V40C6 38 2 35 0 31Z"></path></clipPath>
<linearGradient id="gb" x1="0" y1="0" x2="1" y2="1"><stop offset="0" stop-color="#42b3c2"></stop><stop offset="1" stop-color="#2a86bc"></stop></linearGradient></defs>
<g clip-path="url(#c7)"><rect width="64" height="42" fill="#efefee"></rect><path d="M0 7L29 1.5V4.5L0 11Z" fill="#a3a5a6"></path><path d="M0 12L20 8V9.5L0 14Z" fill="#d2d2d2"></path>
<path d="M28 0H64V30H30Z" fill="#b9b3ac"></path><path d="M30 2L45 0L48 14L37 19Z" fill="#d5d1cb"></path><path d="M37 19L48 14L50 24L40 29Z" fill="#8e8a84"></path>
<path d="M16.5 17L28 11.5L33.5 24.5L21 29.3Z" fill="#0c0c0c"></path><path d="M13 19.5L17.5 17.5L23 29.3H17Z" fill="#fafafa"></path><path d="M11 24L14 22.5L17 29.3H13Z" fill="#1a1a1a"></path>
<path d="M45 0H64V30H50C53 20 49 8 45 0Z" fill="#8b583a"></path><path d="M50 0H58C60 10 59 20 56 30H53C55 20 54 9 50 0Z" fill="#b5805b"></path><path d="M58 0H64V30H59C61 20 61 9 58 0Z" fill="#6d422b"></path>
<path d="M0 30H11V41H0Z" fill="#f1ebe8"></path></g>
<path d="M63.7 0C63.5 14 60 23 55 29.3" fill="none" stroke="#49b4cf" stroke-width="0.7"></path>
<rect x="10.4" y="29.6" width="19.8" height="20" fill="#f3f3f3"></rect><rect x="53" y="29.6" width="20" height="20" fill="#f3f3f3"></rect><rect x="73.6" y="29.6" width="19.6" height="20" fill="#f3f3f3"></rect>
<path d="M31 29.6H52.2V32.6L54 34.8L52.2 37V49.7H31Z" fill="url(#gb)"></path>
<rect x="13.5" y="36.6" width="15" height="3.3" fill="#3f9fd2"></rect><rect x="55" y="36.6" width="15" height="3.3" fill="#3f9fd2"></rect><rect x="75.5" y="36.6" width="15.7" height="3.3" fill="#3f9fd2"></rect><rect x="34" y="36.6" width="14.5" height="3.3" fill="#2b7fb0"></rect><rect x="13.5" y="41" width="14.5" height="0.8" fill="#7a7a7a"></rect><rect x="13.5" y="42.8" width="14" height="0.8" fill="#a3978f"></rect><rect x="13.5" y="44.3" width="11" height="0.8" fill="#c9c9c9"></rect><rect x="14.0" y="32.6" width="3" height="1.6" fill="#b0b0bb"></rect><rect x="15.0" y="37.8" width="11" height="0.8" fill="#dff0f7"></rect><rect x="55" y="41" width="14.5" height="0.8" fill="#7a7a7a"></rect><rect x="55" y="42.8" width="14" height="0.8" fill="#a3978f"></rect><rect x="55" y="44.3" width="11" height="0.8" fill="#c9c9c9"></rect><rect x="55.5" y="32.6" width="3" height="1.6" fill="#b0b0bb"></rect><rect x="56.5" y="37.8" width="11" height="0.8" fill="#dff0f7"></rect><rect x="75.5" y="41" width="14.5" height="0.8" fill="#7a7a7a"></rect><rect x="75.5" y="42.8" width="14" height="0.8" fill="#a3978f"></rect><rect x="75.5" y="44.3" width="11" height="0.8" fill="#c9c9c9"></rect><rect x="76.0" y="32.6" width="3" height="1.6" fill="#b0b0bb"></rect><rect x="77.0" y="37.8" width="11" height="0.8" fill="#dff0f7"></rect><rect x="34" y="41" width="14.5" height="0.8" fill="#eef8fb"></rect><rect x="34" y="42.8" width="14" height="0.8" fill="#eef8fb"></rect><rect x="34" y="44.3" width="11" height="0.8" fill="#bfe0ea"></rect><rect x="34.3" y="32.6" width="3" height="1.6" fill="#edf6f9"></rect><rect x="35.5" y="37.8" width="10" height="0.8" fill="#d9ebf4"></rect><rect x="66.5" y="10.2" width="18" height="1.5" fill="#a3a2ad"></rect><rect x="66" y="15" width="34.5" height="0.8" fill="#949494"></rect><rect x="66" y="17.3" width="33" height="0.8" fill="#a3a3b0"></rect><rect x="66" y="19.6" width="33.5" height="0.8" fill="#949494"></rect><rect x="66" y="21.8" width="7" height="0.8" fill="#d7d7d7"></rect></g><rect x="0.5" y="0.5" width="102" height="58" fill="none" stroke="#bdbdbd" stroke-width="1"></rect></svg>
<svg class="a" style="left:36px;top:260px" width="103" height="59" viewBox="0 0 103 59"><rect x="0" y="0" width="103" height="59" fill="#fff"></rect><g style="filter:blur(0.35px)"><defs><clipPath id="c8"><path d="M16.5 0H103V46C99 47 95 47 92.5 46.5V36H83V36.8H60V35H81.5V19H44.5V21.5Z"></path></clipPath></defs>
<g clip-path="url(#c8)"><rect x="14" width="90" height="48" fill="#e3e1dd"></rect><rect x="49" y="0" width="7" height="21" fill="#b3aba1"></rect><rect x="56" y="0" width="13" height="21" fill="#e9e9e9"></rect>
<rect x="68.5" y="0" width="35" height="12.3" fill="#1f1f1f"></rect><rect x="73" y="1" width="30" height="8.6" fill="#c3cbd0"></rect><rect x="80" y="1" width="9" height="8.6" fill="#d6d6d0"></rect>
<rect x="55" y="13.6" width="48" height="3.2" fill="#8d6b49"></rect><rect x="55" y="16.8" width="48" height="1" fill="#a88a66"></rect><rect x="81" y="17.8" width="22" height="18" fill="#d7cebf"></rect><rect x="60" y="34.5" width="24" height="3" fill="#2a2f38"></rect><path d="M92 35.5C96 35 100 33 103 32V47H92Z" fill="#2c3442"></path>
<path d="M27 5.5L29 3.3L38 3.6V4.4L29.6 4.3L28 6.5Z" fill="#b8a878"></path></g>
<path d="M16.5 0.5L43.7 20.8" fill="none" stroke="#3fa7c8" stroke-width="1"></path><path d="M43.7 20.8V35" fill="none" stroke="#9fd3e2" stroke-width="1.2"></path>
<rect x="44.6" y="19" width="37" height="16" rx="0.8" fill="#fff"></rect>
<rect x="55" y="36" width="37.5" height="16" rx="1.6" fill="url(#gb)"></rect><rect x="5" y="20.2" width="18" height="1.6" fill="#a3a2ad"></rect><rect x="5" y="26.2" width="29" height="0.8" fill="#bcbcbc"></rect><rect x="5" y="28" width="30" height="0.8" fill="#949494"></rect><rect x="5" y="30" width="29" height="0.8" fill="#afafaf"></rect><rect x="5" y="32.2" width="29" height="0.8" fill="#949494"></rect><rect x="5" y="36.8" width="27" height="0.9" fill="#c9c9c9"></rect><rect x="5" y="39" width="27.5" height="0.8" fill="#878787"></rect><rect x="47" y="22" width="10" height="1" fill="#7a7a7a"></rect><rect x="47" y="25" width="31" height="1.2" fill="#949494"></rect><rect x="47" y="27.5" width="30.5" height="0.8" fill="#878787"></rect><rect x="47" y="29.5" width="21" height="0.8" fill="#afafaf"></rect><rect x="58" y="39" width="10.5" height="1" fill="#ffffff"></rect><rect x="58" y="41" width="31" height="0.8" fill="#deeef4"></rect><rect x="58" y="43" width="33" height="1.1" fill="#ffffff"></rect><rect x="58" y="45.6" width="21" height="0.8" fill="#edf6f9"></rect></g><rect x="0.5" y="0.5" width="102" height="58" fill="none" stroke="#bdbdbd" stroke-width="1"></rect></svg>
<svg class="a" style="left:36px;top:339px" width="103" height="59" viewBox="0 0 103 59"><rect x="0" y="0" width="103" height="59" fill="#fff"></rect><g style="filter:blur(0.35px)"><defs><clipPath id="c9"><path d="M0 0H44C50 1 57 8 57.8 15C58 22 56 27 50 30C44 33 36 34.5 26 38C16 42 9 49 1 57.5H0Z"></path></clipPath></defs>
<g clip-path="url(#c9)"><rect width="60" height="59" fill="#f1f3f5"></rect><path d="M0 13L19 5.5L34 35.5L11 45L0 32Z" fill="#dfe4ea"></path><path d="M19 5.5L20.5 5L35.5 35L34 35.5Z" fill="#e3cbb3"></path><path d="M0 13L19 5.5L19.5 6.6L0 14.6Z" fill="#e9d5c2"></path>
<rect x="6" y="20" width="4.6" height="5" fill="#2e3236" transform="rotate(-20 8 22)"></rect><rect x="15.5" y="25.5" width="5.4" height="4.4" fill="#3a3e43" transform="rotate(-20 18 27)"></rect><rect x="11" y="30" width="1.6" height="1.6" fill="#555"></rect><rect x="28.5" y="34" width="2.4" height="1.6" fill="#444"></rect>
<path d="M41 0H60V30C55 28 50 24 46 16C43 10 42 5 41 0Z" fill="#caa690"></path><path d="M40.5 0H60V16C56 8 50 3 40.5 0Z" fill="#4f3d2e"></path><path d="M44 10C47 14 50 22 54 27L58 20V10Z" fill="#a98670"></path><path d="M46 26L54 30L50 33L42 31Z" fill="#f3f3f5"></path>
<path d="M26 24.5L38 26.5C41 27.5 42 31 40 33L32 31.5Z" fill="#ecccbc"></path><path d="M0 20L4 24L9 40L3 44L0 42Z" fill="#ddb7a6"></path><path d="M4 44L14 40L18 46L0 58V47Z" fill="#f6f6f8"></path></g>
<path d="M46 1C53 3 58.5 9 58.6 16C58.8 23 56 28 50 31C44 34 36 35.5 26 39.5C16 43.5 9 50 1.5 58" fill="none" stroke="#2f8fc5" stroke-width="1.6"></path><path d="M56 27C50 33 36 35.5 26 39.5C18 43 12 47.5 7 53" fill="none" stroke="#2f8fc5" stroke-width="2.6"></path><rect x="61" y="10.6" width="18" height="1.8" fill="#a3a2ad"></rect><rect x="61" y="16" width="37" height="0.8" fill="#878787"></rect><rect x="61" y="17.8" width="37" height="0.8" fill="#afafaf"></rect><rect x="61" y="19.4" width="38" height="0.8" fill="#949494"></rect><rect x="61" y="21.4" width="36" height="0.8" fill="#c9c9c9"></rect><rect x="61" y="22.8" width="12" height="0.8" fill="#bcbcbc"></rect><rect x="61" y="26.4" width="33" height="0.8" fill="#afafaf"></rect><rect x="61" y="28.6" width="29" height="0.8" fill="#c9c9c9"></rect><rect x="61" y="30.4" width="24" height="0.8" fill="#afafaf"></rect><circle cx="28" cy="42.5" r="2.5" fill="#fff" stroke="#7cc0e0" stroke-width="0.8"></circle><rect x="27.1" y="41.7" width="1.8" height="1.6" fill="#9fd0e8"></rect><rect x="31.3" y="41.1" width="27" height="0.8" fill="#bcbcbc"></rect><rect x="31.3" y="43.0" width="27.5" height="0.8" fill="#878787"></rect><circle cx="64.5" cy="42.5" r="2.5" fill="#fff" stroke="#7cc0e0" stroke-width="0.8"></circle><rect x="63.6" y="41.7" width="1.8" height="1.6" fill="#9fd0e8"></rect><rect x="67.8" y="41.1" width="27" height="0.8" fill="#bcbcbc"></rect><rect x="67.8" y="43.0" width="27.5" height="0.8" fill="#878787"></rect><circle cx="19.5" cy="49.5" r="2.5" fill="#fff" stroke="#7cc0e0" stroke-width="0.8"></circle><rect x="18.6" y="48.7" width="1.8" height="1.6" fill="#9fd0e8"></rect><rect x="22.8" y="48.1" width="27" height="0.8" fill="#bcbcbc"></rect><rect x="22.8" y="50.0" width="27.5" height="0.8" fill="#878787"></rect><circle cx="56.5" cy="49.5" r="2.5" fill="#fff" stroke="#7cc0e0" stroke-width="0.8"></circle><rect x="55.6" y="48.7" width="1.8" height="1.6" fill="#9fd0e8"></rect><rect x="59.8" y="48.1" width="27" height="0.8" fill="#bcbcbc"></rect><rect x="59.8" y="50.0" width="27.5" height="0.8" fill="#878787"></rect></g><rect x="0.5" y="0.5" width="102" height="58" fill="none" stroke="#bdbdbd" stroke-width="1"></rect></svg>
<svg class="a" style="left:36px;top:418px" width="103" height="59" viewBox="0 0 103 59"><rect x="0" y="0" width="103" height="59" fill="#fff"></rect><g style="filter:blur(0.35px)"><defs><radialGradient id="g10" cx="0.4" cy="0.35" r="0.8"><stop offset="0" stop-color="#45b5c6"></stop><stop offset="1" stop-color="#2786bb"></stop></radialGradient></defs>
<circle cx="51.6" cy="29.4" r="12.3" fill="url(#g10)"></circle>
<text x="51.6" y="27.4" font-family="Liberation Sans" font-size="4.4" fill="#d4ecf4" text-anchor="middle">OUR</text><text x="51.6" y="32.4" font-family="Liberation Sans" font-size="4.4" fill="#d4ecf4" text-anchor="middle" textLength="20.5" lengthAdjust="spacingAndGlyphs">SERVICES</text><circle cx="40.5" cy="15.5" r="3.9" fill="#fff" stroke="#6fbbe0" stroke-width="0.8"></circle><rect x="39.9" y="14.3" width="1.2" height="0.8" fill="#b9a9d0"></rect><circle cx="63" cy="15.5" r="3.9" fill="#fff" stroke="#6fbbe0" stroke-width="0.8"></circle><rect x="62.4" y="14.3" width="1.2" height="0.8" fill="#b9a9d0"></rect><circle cx="34.3" cy="30" r="3.9" fill="#fff" stroke="#6fbbe0" stroke-width="0.8"></circle><rect x="33.699999999999996" y="28.8" width="1.2" height="0.8" fill="#b9a9d0"></rect><circle cx="69.3" cy="30" r="3.9" fill="#fff" stroke="#6fbbe0" stroke-width="0.8"></circle><rect x="68.7" y="28.8" width="1.2" height="0.8" fill="#b9a9d0"></rect><circle cx="40.5" cy="43.6" r="3.9" fill="#fff" stroke="#6fbbe0" stroke-width="0.8"></circle><rect x="39.9" y="42.4" width="1.2" height="0.8" fill="#b9a9d0"></rect><circle cx="63" cy="43.6" r="3.9" fill="#fff" stroke="#6fbbe0" stroke-width="0.8"></circle><rect x="62.4" y="42.4" width="1.2" height="0.8" fill="#b9a9d0"></rect><rect x="21" y="14.3" width="10" height="0.8" fill="#d4d4d4"></rect><rect x="14.5" y="16.2" width="16.5" height="0.8" fill="#8d8d8d"></rect><rect x="15.5" y="18.1" width="15.5" height="0.8" fill="#b0b0b0"></rect><rect x="17.5" y="27.8" width="11.5" height="0.8" fill="#8d8d8d"></rect><rect x="12" y="29.85" width="17" height="0.8" fill="#b0b0b0"></rect><rect x="13" y="31.9" width="16" height="0.8" fill="#b0b0b0"></rect><rect x="22" y="40.8" width="11" height="0.8" fill="#d4d4d4"></rect><rect x="16.5" y="42.699999999999996" width="16.5" height="0.8" fill="#8d8d8d"></rect><rect x="17" y="44.599999999999994" width="16" height="0.8" fill="#d4d4d4"></rect><rect x="73.5" y="14.3" width="11.5" height="0.8" fill="#d4d4d4"></rect><rect x="73.5" y="16.2" width="16.5" height="0.8" fill="#8d8d8d"></rect><rect x="73.5" y="18.1" width="15.5" height="0.8" fill="#b0b0b0"></rect><rect x="74.5" y="27.8" width="11.5" height="0.8" fill="#8d8d8d"></rect><rect x="74.5" y="29.85" width="16.5" height="0.8" fill="#b0b0b0"></rect><rect x="74.5" y="31.9" width="15.5" height="0.8" fill="#b0b0b0"></rect><rect x="70" y="40.8" width="11" height="0.8" fill="#d4d4d4"></rect><rect x="70" y="42.699999999999996" width="16" height="0.8" fill="#8d8d8d"></rect><rect x="70" y="44.599999999999994" width="15" height="0.8" fill="#d4d4d4"></rect></g><rect x="0.5" y="0.5" width="102" height="58" fill="none" stroke="#bdbdbd" stroke-width="1"></rect></svg>
<svg class="a" style="left:36px;top:497px" width="103" height="59" viewBox="0 0 103 59"><rect x="0" y="0" width="103" height="59" fill="#fff"></rect><g style="filter:blur(0.35px)"><defs><linearGradient id="gp" x1="0" y1="0" x2="1" y2="0"><stop offset="0" stop-color="#45b3c2"></stop><stop offset="1" stop-color="#2a86bc"></stop></linearGradient></defs><rect x="41" y="6.6" width="22" height="1.7" fill="#4a4a78"></rect><clipPath id="p0"><circle cx="18.7" cy="24.2" r="8.3"></circle></clipPath><g clip-path="url(#p0)"><rect x="9.7" y="15" width="18" height="18" fill="#b8a893"></rect><rect x="9.7" y="15" width="8" height="18" fill="#c9cdc8"></rect><rect x="13.7" y="15" width="2" height="18" fill="#8f9a92"></rect><path d="M19.7 18.5C19.7 16.5 24.7 16.5 24.7 19V27H19.7Z" fill="#5e4232"></path><circle cx="22.0" cy="19.6" r="1.7" fill="#e6c3ab"></circle><path d="M18.7 30.5C18.7 22 25.7 22 25.7 30.5Z" fill="#f4f1ee"></path><rect x="18.7" y="30" width="8" height="4" fill="#2a2624"></rect></g><circle cx="18.7" cy="24.2" r="8.7" fill="none" stroke="#2f9ec4" stroke-width="1.1"></circle><rect x="11.7" y="36.8" width="14" height="1" fill="#717171"></rect><rect x="9.6" y="39.8" width="18.3" height="3.9" rx="1.95" fill="url(#gp)"></rect><rect x="15.5" y="41.3" width="6.4" height="0.7" fill="#e9f4f8"></rect><rect x="9.899999999999999" y="46" width="17.6" height="0.8" fill="#949494"></rect><rect x="10.7" y="48" width="16" height="0.8" fill="#c5c5c5"></rect><clipPath id="p1"><circle cx="52" cy="24.2" r="8.3"></circle></clipPath><g clip-path="url(#p1)"><rect x="43" y="15" width="18" height="18" fill="#e6eaee"></rect><rect x="43" y="15" width="3" height="18" fill="#b7c6c4"></rect><circle cx="53" cy="19" r="2" fill="#3d3129"></circle><circle cx="53" cy="19.8" r="1.6" fill="#e3c0a8"></circle><path d="M47 33C47 20.5 59 20.5 59 33Z" fill="#1f3566"></path><path d="M52 22.2L53 26L54 22.2Z" fill="#f4f4f4"></path></g><circle cx="52" cy="24.2" r="8.7" fill="none" stroke="#2f9ec4" stroke-width="1.1"></circle><rect x="47.0" y="36.8" width="10" height="1" fill="#717171"></rect><rect x="42.9" y="39.8" width="18.3" height="3.9" rx="1.95" fill="url(#gp)"></rect><rect x="48.8" y="41.3" width="6.4" height="0.7" fill="#e9f4f8"></rect><rect x="43.2" y="46" width="17.6" height="0.8" fill="#949494"></rect><rect x="44" y="48" width="16" height="0.8" fill="#c5c5c5"></rect><clipPath id="p2"><circle cx="84.1" cy="24.2" r="8.3"></circle></clipPath><g clip-path="url(#p2)"><rect x="75.1" y="15" width="18" height="18" fill="#efecea"></rect><circle cx="84.1" cy="20.3" r="3.4" fill="#3a2418"></circle><circle cx="84.1" cy="21.4" r="1.7" fill="#ad7553"></circle><path d="M79.1 32C79.1 22.5 89.1 22.5 89.1 32Z" fill="#fafafa"></path><path d="M78.6 29L82.1 31.5M89.6 29L86.1 31.5" stroke="#b98062" stroke-width="1.2"></path></g><circle cx="84.1" cy="24.2" r="8.7" fill="none" stroke="#2f9ec4" stroke-width="1.1"></circle><rect x="78.6" y="36.8" width="11" height="1" fill="#717171"></rect><rect x="75.0" y="39.8" width="18.3" height="3.9" rx="1.95" fill="url(#gp)"></rect><rect x="80.89999999999999" y="41.3" width="6.4" height="0.7" fill="#e9f4f8"></rect><rect x="75.3" y="46" width="17.6" height="0.8" fill="#949494"></rect><rect x="76.1" y="48" width="16" height="0.8" fill="#c5c5c5"></rect></g><rect x="0.5" y="0.5" width="102" height="58" fill="none" stroke="#bdbdbd" stroke-width="1"></rect></svg>
<div class="a" style="left:33px;top:573px;width:109.2px;height:65px;background:#7a0d14;"></div>
<svg class="a" style="left:36px;top:576px" width="103" height="59" viewBox="0 0 103 59"><rect x="0" y="0" width="103" height="59" fill="#fff"></rect><g style="filter:blur(0.3px)"><svg x="0" y="0" width="103" height="59" viewBox="230 171 882 497"><g><path d="M668.8 286.05A103 99 0 0 0 569 385C569 395 571 404 574.2 412L602.2 412A15.5 15.5 0 0 0 633.2 412L668.8 412L668.8 366.6A20 20 0 0 1 668.8 328Z" fill="#2a92c0"></path>
<path d="M674.2 286.02A103 99 0 0 1 775 385C775 395 773.5 404 770.6 412L743.9 412A20 20 0 0 0 704.7 412L674.2 412L674.2 362.55A15.3 15.3 0 1 1 674.2 332.05Z" fill="#63bcbc"></path>
<path d="M575.6 416.2L598.15 416.2A20 20 0 0 0 637.25 416.2L669.2 416.2L669.2 464.2A16.3 16.3 0 1 1 669.2 496.8L669.2 542L630.2 542C619.8 502 596.4 456.2 575.6 416.2Z" fill="#79bfe0"></path>
<path d="M673.9 416.2L708.9 416.2A15.4 15.4 0 0 1 739.7 416.2L769 416.2C748.2 456.2 725.4 502 715 542L673.9 542L673.9 500.1A20 20 0 0 0 673.9 460.9Z" fill="#3f9896"></path>
<rect x="626.1" y="552" width="90.8" height="13.2" rx="6.6" fill="#1f6b8c"></rect>
<rect x="624" y="574.6" width="95.1" height="12.8" rx="6.4" fill="#1f6b8c"></rect>
<rect x="633.3" y="597.5" width="76.5" height="13.1" rx="6.55" fill="#1f6b8c"></rect></g><g stroke-width="4"><path d="M495 361.4H570" stroke="#2a92c0" stroke-width="5"></path><path d="M774 361.4H848" stroke="#63bcbc" stroke-width="5"></path><path d="M497 509.4H619" stroke="#63bcbc" stroke-width="4" stroke-dasharray="14 6"></path><path d="M724 509.4H847" stroke="#2a92c0" stroke-width="5"></path><circle cx="497" cy="361.4" r="9" fill="#2a92c0"></circle><circle cx="848" cy="361.4" r="9" fill="#63bcbc"></circle><circle cx="497" cy="509.4" r="9" fill="#63bcbc"></circle><circle cx="848" cy="509.4" r="9" fill="#2a92c0"></circle></g><text x="671.5" y="252" font-family="Liberation Sans" font-weight="bold" font-size="27" fill="#404040" text-anchor="middle">INFOGRAPHIC BULB</text><rect x="418" y="346" width="62" height="7" fill="#555"></rect><rect x="325" y="371" width="155" height="5" fill="#8a8a8a"></rect><rect x="325" y="386" width="155" height="5" fill="#a8a8a8"></rect><rect x="332" y="401" width="148" height="5" fill="#8a8a8a"></rect><rect x="418" y="492" width="62" height="7" fill="#555"></rect><rect x="325" y="515" width="155" height="5" fill="#8a8a8a"></rect><rect x="325" y="530" width="155" height="5" fill="#a8a8a8"></rect><rect x="332" y="545" width="148" height="5" fill="#8a8a8a"></rect><rect x="863" y="345" width="62" height="7" fill="#555"></rect><rect x="863" y="367" width="155" height="5" fill="#8a8a8a"></rect><rect x="863" y="383" width="155" height="5" fill="#a8a8a8"></rect><rect x="863" y="398" width="148" height="5" fill="#8a8a8a"></rect><rect x="863" y="492" width="62" height="7" fill="#555"></rect><rect x="863" y="515" width="155" height="5" fill="#8a8a8a"></rect><rect x="863" y="530" width="155" height="5" fill="#a8a8a8"></rect><rect x="863" y="545" width="148" height="5" fill="#8a8a8a"></rect></svg></g><rect x="0.5" y="0.5" width="102" height="58" fill="none" stroke="#fff" stroke-width="1"></rect></svg>
<svg class="a" style="left:36px;top:655px" width="103" height="27" viewBox="0 0 103 27"><rect x="0" y="0" width="103" height="59" fill="#fff"></rect><g style="filter:blur(0.35px)"><rect x="39.7" y="7.8" width="24" height="1.3" fill="#a3a3a3"></rect><rect x="14.4" y="14.6" width="5.6" height="6" fill="#e4f4f6" stroke="#3aaeb4" stroke-width="0.9"></rect><rect x="16.0" y="16.2" width="2.4" height="2.8" fill="#9fd6dc"></rect><path d="M20.6 17.6H27.6" stroke="#2f8fc4" stroke-width="1"></path><path d="M27.0 16.4L28.8 17.6L27.0 18.8Z" fill="#2f8fc4"></path><rect x="13.9" y="22.6" width="9.5" height="0.7" fill="#878787"></rect><rect x="13.9" y="24.8" width="10.5" height="0.9" fill="#a3a3a3"></rect><rect x="29.4" y="14.6" width="5.6" height="6" fill="#e4f4f6" stroke="#3aaeb4" stroke-width="0.9"></rect><rect x="31.0" y="16.2" width="2.4" height="2.8" fill="#9fd6dc"></rect><path d="M35.6 17.6H42.599999999999994" stroke="#2f8fc4" stroke-width="1"></path><path d="M42.0 16.4L43.8 17.6L42.0 18.8Z" fill="#2f8fc4"></path><rect x="28.9" y="22.6" width="9.5" height="0.7" fill="#878787"></rect><rect x="28.9" y="24.8" width="10.5" height="0.9" fill="#a3a3a3"></rect><rect x="44.4" y="14.6" width="5.6" height="6" fill="#e4f4f6" stroke="#3aaeb4" stroke-width="0.9"></rect><rect x="46.0" y="16.2" width="2.4" height="2.8" fill="#9fd6dc"></rect><path d="M50.6 17.6H57.599999999999994" stroke="#2f8fc4" stroke-width="1"></path><path d="M57.0 16.4L58.8 17.6L57.0 18.8Z" fill="#2f8fc4"></path><rect x="43.9" y="22.6" width="9.5" height="0.7" fill="#878787"></rect><rect x="43.9" y="24.8" width="10.5" height="0.9" fill="#a3a3a3"></rect><rect x="59.4" y="14.6" width="5.6" height="6" fill="#e4f4f6" stroke="#3aaeb4" stroke-width="0.9"></rect><rect x="61.0" y="16.2" width="2.4" height="2.8" fill="#9fd6dc"></rect><path d="M65.6 17.6H72.6" stroke="#2f8fc4" stroke-width="1"></path><path d="M72.0 16.4L73.8 17.6L72.0 18.8Z" fill="#2f8fc4"></path><rect x="58.9" y="22.6" width="9.5" height="0.7" fill="#878787"></rect><rect x="58.9" y="24.8" width="10.5" height="0.9" fill="#a3a3a3"></rect><rect x="74.4" y="14.6" width="5.6" height="6" fill="#e4f4f6" stroke="#3aaeb4" stroke-width="0.9"></rect><rect x="76.0" y="16.2" width="2.4" height="2.8" fill="#9fd6dc"></rect><rect x="73.9" y="22.6" width="9.5" height="0.7" fill="#878787"></rect><rect x="73.9" y="24.8" width="10.5" height="0.9" fill="#a3a3a3"></rect><path d="M80.6 17.6H89.4V27" fill="none" stroke="#3f9fd0" stroke-width="1"></path></g><rect x="0.5" y="0.5" width="102" height="58" fill="none" stroke="#bdbdbd" stroke-width="1"></rect></svg>
<span class="t" style="left: 8.8px; top: 686px; font-size: 11.7px; line-height: 13px; color: rgb(68, 68, 68); letter-spacing: -0.15px;">Slide 12 of 16</span>
<svg class="a" style="left:96px;top:686px;" width="16" height="15" viewBox="0 0 16 15"><g fill="none" stroke="#444" stroke-width="1.1" stroke-linecap="round"><path d="M7.5 6V3C7.5 1.8 6.5 1.5 5.5 1.5H1.5V12.5H6C7 12.5 7.5 11.5 7.5 10.5V9.2"></path><path d="M7.5 3C7.5 1.8 8.5 1.5 9.5 1.5H13.5V6"></path><path d="M8.4 7.4L14.6 13.5M14.6 7.4L8.4 13.5"></path></g></svg>
<span class="t" style="left: 128.3px; top: 686px; font-size: 11.7px; line-height: 13px; color: rgb(68, 68, 68); letter-spacing: -0.18px;">English (United States)</span>
<svg class="a" style="left:738px;top:685.5px;" width="17" height="16" viewBox="0 0 17 16"><g fill="none" stroke="#444" stroke-width="1.1"><path d="M5 3.8L8 0.9L11 3.8"></path><path d="M0.3 7.2H16M0.3 11.1H16M0.3 14.9H16"></path></g></svg>
<span class="t" style="left: 756.2px; top: 687px; font-size: 11.7px; line-height: 13px; color: rgb(68, 68, 68); letter-spacing: -0.26px;">Notes</span>
<div class="a" style="left:805px;top:683px;width:40px;height:21px;background:#d0cecd;"></div>
<svg class="a" style="left:818px;top:687px;" width="15" height="13" viewBox="0 0 15 13"><g fill="none" stroke="#444" stroke-width="1.1"><rect x="0.55" y="0.55" width="13.5" height="11.2"></rect><path d="M3.5 0.5V11.7"></path><rect x="5.8" y="3.2" width="5.8" height="3.6"></rect></g></svg>
<svg class="a" style="left:858px;top:687px;" width="15" height="13" viewBox="0 0 15 13"><g fill="none" stroke="#444" stroke-width="1.1"><rect x="0.55" y="0.55" width="4.6" height="4.2"></rect><rect x="8.4" y="0.55" width="4.6" height="4.2"></rect><rect x="0.55" y="7.4" width="4.6" height="4.2"></rect><rect x="8.4" y="7.4" width="4.6" height="4.2"></rect></g></svg>
<svg class="a" style="left:898px;top:686.5px;" width="14" height="14" viewBox="0 0 14 14"><g fill="none" stroke="#444" stroke-width="1.1"><path d="M6.5 2C5 0.8 2.5 0.6 0.6 1V11C2.5 10.6 5 10.8 6.5 12C8 10.8 10.5 10.6 12.4 11V1C10.5 0.6 8 0.8 6.5 2ZM6.5 2V12.6"></path><path d="M2.3 3.4H4.8M2.3 5.6H4.8M2.3 7.8H4.8M8.2 3.4H10.7M8.2 5.6H10.7M8.2 7.8H10.7" stroke-width="0.9"></path></g></svg>
<svg class="a" style="left:938px;top:686.5px;" width="13" height="15" viewBox="0 0 13 15"><g fill="none" stroke="#444" stroke-width="1.1"><path d="M0 0.8H12.4"></path><path d="M1.5 0.8V7.5H10.9V0.8"></path><path d="M6.2 7.5V12.3M3 12.6H9.4"></path></g></svg>
<div class="a" style="left:971px;top:692.5px;width:8px;height:1.1px;background:#444;"></div>
<div class="a" style="left:984px;top:692.6px;width:100px;height:1px;background:#a0a0a0;"></div>
<div class="a" style="left:1034px;top:690.3px;width:1px;height:5.4px;background:#a0a0a0;"></div>
<div class="a" style="left:1003px;top:688px;width:5px;height:11px;background:#666;"></div>
<div class="a" style="left:1089px;top:692.5px;width:8px;height:1.1px;background:#444;"></div>
<div class="a" style="left:1092.5px;top:689px;width:1.1px;height:8px;background:#444;"></div>
<span class="t" style="left: 1109.5px; top: 686px; font-size: 11.7px; line-height: 13px; color: rgb(68, 68, 68); letter-spacing: -1.05px;">46%</span>
<svg class="a" style="left:1143px;top:684.5px;" width="16" height="17" viewBox="0 0 16 17"><g fill="none" stroke="#444" stroke-width="1.1"><rect x="4.6" y="5" width="6.2" height="6.4"></rect><path d="M5.2 2.8L7.7 0.6L10.2 2.8M5.2 13.6L7.7 15.8L10.2 13.6M2.4 5.8L0.6 8.2L2.4 10.6M13 5.8L14.8 8.2L13 10.6"></path></g></svg>
</div>

</body></html>
